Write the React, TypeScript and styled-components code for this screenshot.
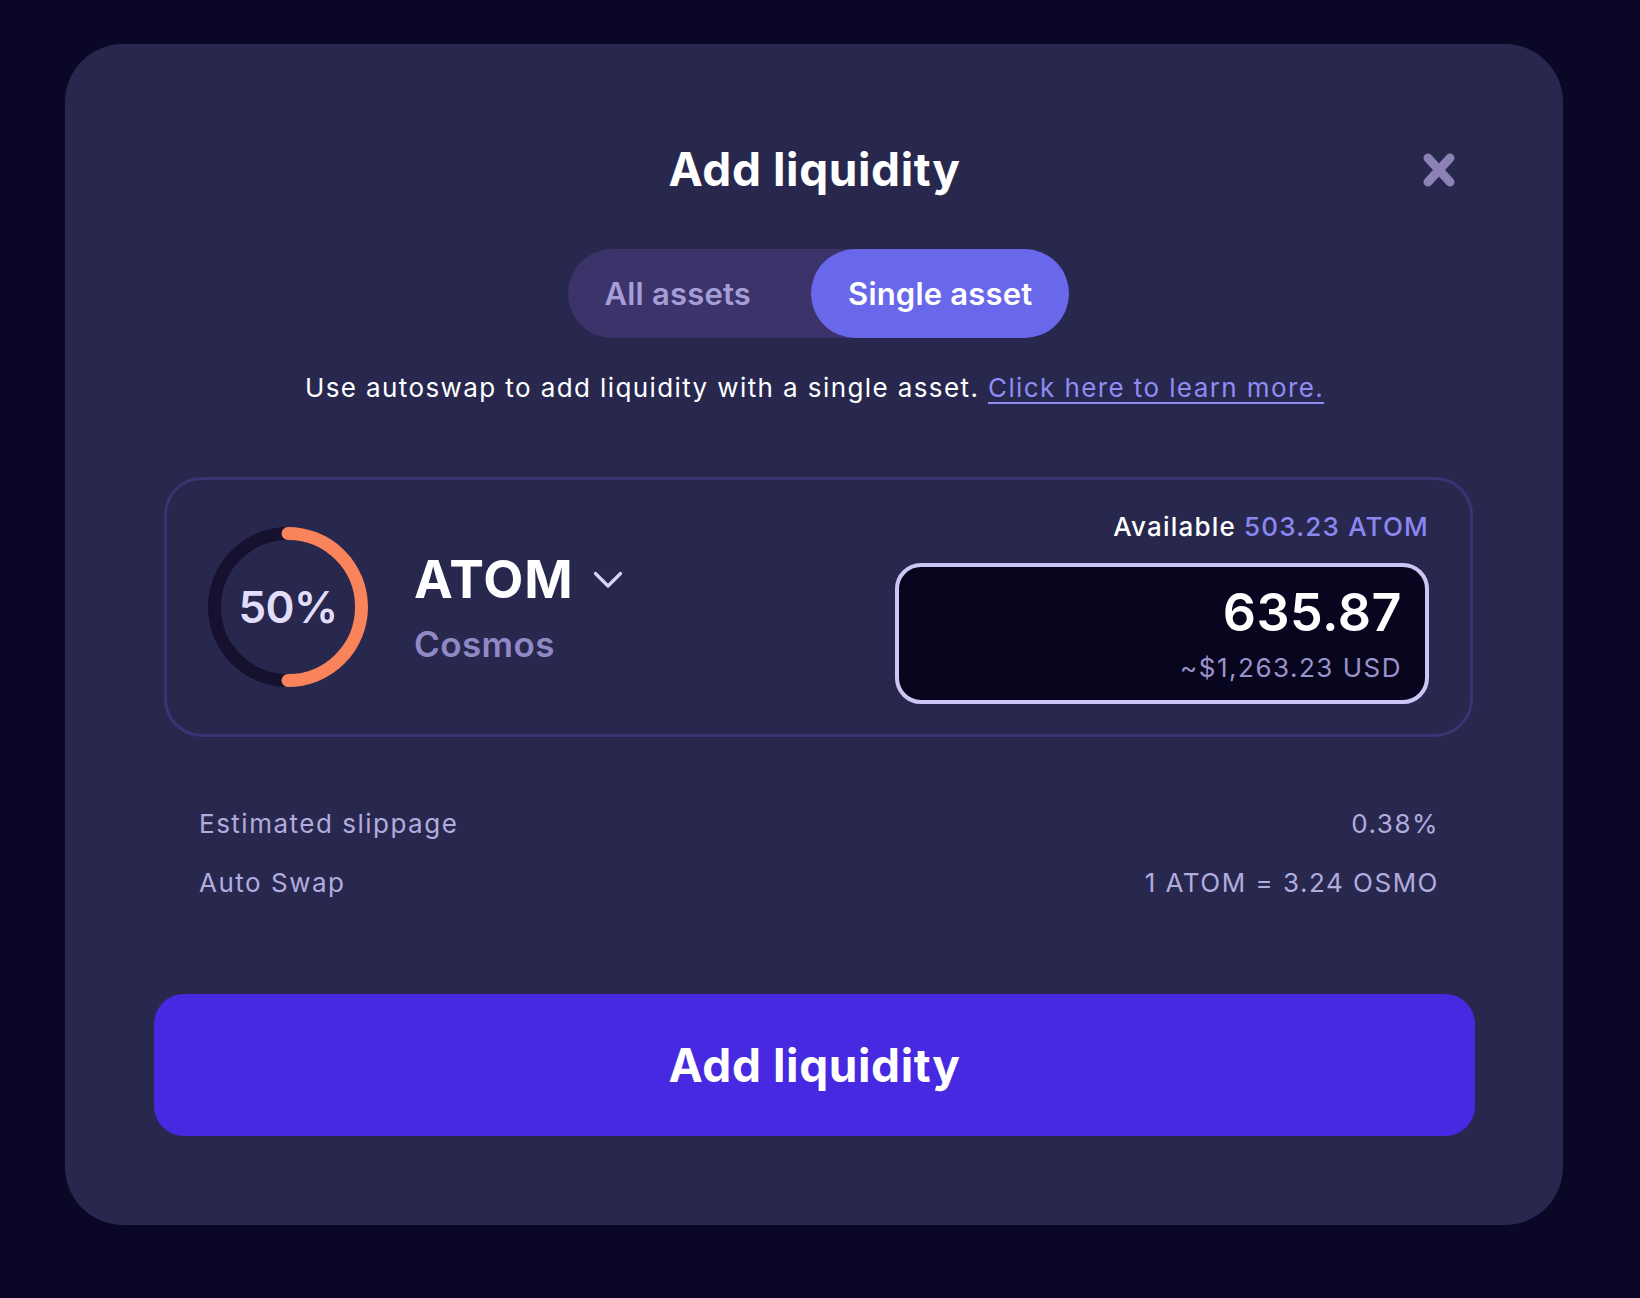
import React from "react";
import styled, { createGlobalStyle } from "styled-components";

const Global = createGlobalStyle`
  html, body { margin: 0; padding: 0; background: #0a0826; }
  body { font-family: Inter, "Noto Sans", sans-serif; -webkit-font-smoothing: antialiased; }
  #root { width: 1640px; min-height: 1298px; }
`;

const Page = styled.div`
  width: 1640px;
  height: 1298px;
  box-sizing: border-box;
  padding: 44px 0 0 65px;
  background: #0a0826;
`;

const Modal = styled.div`
  width: 1498px;
  height: 1181px;
  box-sizing: border-box;
  background: #28284f;
  border-radius: 58px;
  padding: 97px 88px 89px 89px;
  display: flex;
  flex-direction: column;
`;

const Header = styled.div`
  display: grid;
  grid-template-columns: 1fr auto 1fr;
  align-items: center;
  height: 56px;
`;

const Title = styled.h1`
  grid-column: 2;
  margin: 0;
  font-family: Inter, sans-serif;
  font-weight: 700;
  font-size: 46px;
  line-height: 56px;
  letter-spacing: 0.6px;
  color: #ffffff;
`;

const CloseButton = styled.button`
  grid-column: 3;
  justify-self: end;
  margin-right: 19px;
  margin-top: 2px;
  width: 34px;
  height: 36px;
  padding: 0;
  border: none;
  background: transparent;
  display: flex;
  cursor: pointer;
`;

const Toggle = styled.div`
  align-self: center;
  margin-top: 52px;
  margin-left: 8px;
  display: flex;
  gap: 23px;
  height: 89px;
  background: #3c336b;
  border-radius: 999px;
`;

const Segment = styled.button<{ $active?: boolean }>`
  height: 89px;
  padding: 0 37px;
  border: none;
  border-radius: 999px;
  font-family: Inter, sans-serif;
  font-weight: 600;
  font-size: 31px;
  letter-spacing: 0.2px;
  background: ${(p) => (p.$active ? "#6a68ea" : "transparent")};
  color: ${(p) => (p.$active ? "#ffffff" : "#a59ed6")};
  cursor: pointer;
`;

const Hint = styled.p`
  margin: 34px 0 0;
  text-align: center;
  font-size: 26px;
  line-height: 32px;
  letter-spacing: 1.4px;
  color: #ffffff;
  font-weight: 400;
`;

const Link = styled.a`
  color: #8f8cf4;
  text-decoration: underline;
  text-underline-offset: 5px;
  text-decoration-thickness: 2px;
`;

const AssetCard = styled.div`
  margin: 73px 2px 0 10px;
  height: 260px;
  box-sizing: border-box;
  border: 3px solid #3b3473;
  border-radius: 38px;
  padding: 0 41px;
  display: flex;
  align-items: center;
  justify-content: space-between;
`;

const AssetInfo = styled.div`
  display: flex;
  align-items: center;
  gap: 46px;
`;

const Ring = styled.div`
  display: grid;
  width: 160px;
  height: 160px;
  & > * { grid-area: 1 / 1; }
`;

const RingLabel = styled.span`
  place-self: center;
  font-size: 44px;
  font-weight: 600;
  color: #e2ddf9;
  letter-spacing: -0.6px;
`;

const NameBlock = styled.div`
  display: flex;
  flex-direction: column;
  gap: 13px;
`;

const SymbolRow = styled.div`
  display: flex;
  align-items: center;
  gap: 19px;
`;

const Symbol = styled.span`
  font-size: 52px;
  line-height: 60px;
  font-weight: 700;
  color: #ffffff;
  letter-spacing: 1px;
`;

const AssetName = styled.span`
  font-size: 35px;
  line-height: 42px;
  font-weight: 600;
  color: #9189c5;
  letter-spacing: 0.4px;
`;

const AmountColumn = styled.div`
  display: flex;
  flex-direction: column;
  align-items: flex-end;
  gap: 20px;
`;

const Available = styled.span`
  font-size: 26px;
  line-height: 32px;
  font-weight: 500;
  color: #ffffff;
  letter-spacing: 1.2px;
`;

const AvailableValue = styled.span`
  color: #8b87f1;
`;

const AmountBox = styled.div`
  width: 534px;
  height: 141px;
  box-sizing: border-box;
  border: 4px solid #cdc5f3;
  border-radius: 26px;
  background: #08061f;
  padding: 16px 23px 0 0;
  display: flex;
  flex-direction: column;
  align-items: flex-end;
  gap: 10px;
`;

const Amount = styled.span`
  font-size: 52px;
  line-height: 60px;
  font-weight: 600;
  color: #ffffff;
  letter-spacing: 0.5px;
`;

const Fiat = styled.span`
  font-size: 26px;
  line-height: 30px;
  font-weight: 400;
  color: #9a93c9;
  letter-spacing: 1.5px;
`;

const Details = styled.div`
  margin-top: 71px;
  padding: 0 36px 0 45px;
  display: flex;
  flex-direction: column;
  gap: 27px;
`;

const DetailRow = styled.div`
  display: flex;
  justify-content: space-between;
  font-size: 26px;
  line-height: 32px;
  color: #b2abde;
  letter-spacing: 1.5px;
`;

const SubmitButton = styled.button`
  margin-top: 95px;
  height: 142px;
  border: none;
  border-radius: 30px;
  background: #4629e0;
  color: #ffffff;
  font-family: Inter, sans-serif;
  font-weight: 700;
  font-size: 46px;
  letter-spacing: 0.6px;
  cursor: pointer;
`;

export default function App() {
  return (
    <Page>
      <Global />
      <Modal>
        <Header>
          <Title>Add liquidity</Title>
          <CloseButton aria-label="Close">
            <svg width="34" height="36" viewBox="0 0 34 36">
              <path d="M6 6 L28 30 M28 6 L6 30" stroke="#8d82b6" strokeWidth="9" strokeLinecap="round" fill="none" />
            </svg>
          </CloseButton>
        </Header>

        <Toggle>
          <Segment>All assets</Segment>
          <Segment $active>Single asset</Segment>
        </Toggle>

        <Hint>
          Use autoswap to add liquidity with a single asset. <Link href="#">Click here to learn more.</Link>
        </Hint>

        <AssetCard>
          <AssetInfo>
            <Ring>
              <svg width="160" height="160" viewBox="0 0 160 160">
                <circle cx="80" cy="80" r="73.5" stroke="#15112f" strokeWidth="13" fill="none" />
                <path d="M80 6.5 A73.5 73.5 0 0 1 80 153.5" stroke="#f9845b" strokeWidth="13" strokeLinecap="round" fill="none" />
              </svg>
              <RingLabel>50%</RingLabel>
            </Ring>
            <NameBlock>
              <SymbolRow>
                <Symbol>ATOM</Symbol>
                <svg width="30" height="18" viewBox="0 0 30 18">
                  <path d="M2.5 2.5 L15 15 L27.5 2.5" stroke="#d9d3f6" strokeWidth="3.2" strokeLinecap="round" strokeLinejoin="round" fill="none" />
                </svg>
              </SymbolRow>
              <AssetName>Cosmos</AssetName>
            </NameBlock>
          </AssetInfo>
          <AmountColumn>
            <Available>
              Available <AvailableValue>503.23 ATOM</AvailableValue>
            </Available>
            <AmountBox>
              <Amount>635.87</Amount>
              <Fiat>~$1,263.23 USD</Fiat>
            </AmountBox>
          </AmountColumn>
        </AssetCard>

        <Details>
          <DetailRow>
            <span>Estimated slippage</span>
            <span>0.38%</span>
          </DetailRow>
          <DetailRow>
            <span>Auto Swap</span>
            <span>1 ATOM = 3.24 OSMO</span>
          </DetailRow>
        </Details>

        <SubmitButton>Add liquidity</SubmitButton>
      </Modal>
    </Page>
  );
}
